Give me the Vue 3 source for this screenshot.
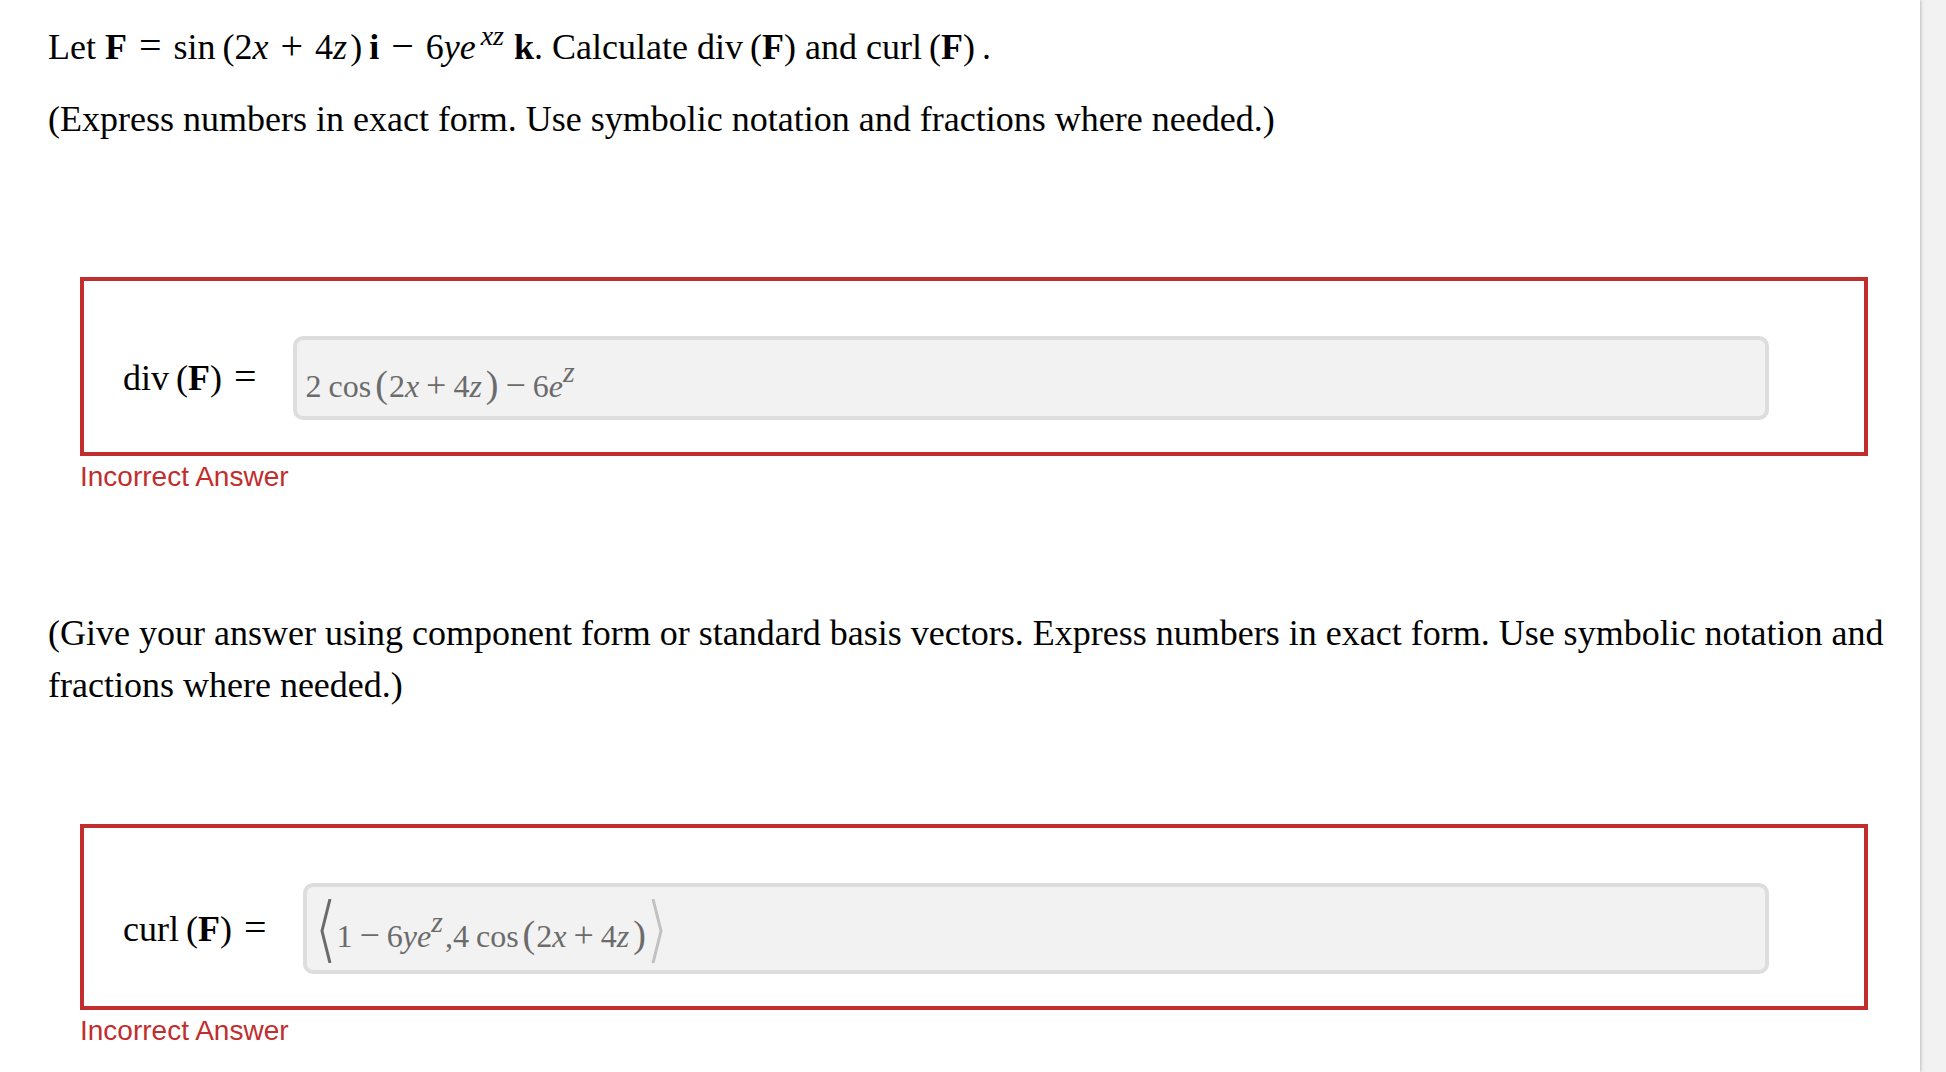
<script setup>
import { ref } from 'vue'

const divAnswer = ref('')
const curlAnswer = ref('')
</script>

<template>
  <main class="page">
    <p class="prompt">
      Let <b>F</b><span class="rel">=</span>sin<span class="thin"></span>(2<i>x</i><span class="bin">+</span>4<i class="slant">z</i>)<span class="thin"></span><b>i</b><span class="bin">−</span>6<i>ye</i><sup class="power"><i>xz</i></sup><span class="thin"></span><b>k</b>. Calculate div<span class="thin"></span>(<b>F</b>) and curl<span class="thin"></span>(<b>F</b>)<span class="thin"></span>.
    </p>
    <p class="note">(Express numbers in exact form. Use symbolic notation and fractions where needed.)</p>

    <section class="answer">
      <div class="frame">
        <label class="name" for="div-answer">div<span class="thin"></span>(<b>F</b>)<span class="rel end">=</span></label>
        <div class="field">
          <input id="div-answer" v-model="divAnswer" class="box" type="text" disabled />
          <div class="math">
            <span>2</span><span class="fn">cos</span><span class="paren">(</span><span>2<i>x</i></span><span class="op">+</span><span>4<i>z</i></span><span class="paren close">)</span><span class="op">−</span><span>6<i>e</i></span><sup class="exp"><i>z</i></sup>
          </div>
        </div>
      </div>
      <p class="status">Incorrect Answer</p>
    </section>

    <p class="note second">
      (Give your answer using component form or standard basis vectors. Express numbers in exact form. Use symbolic notation and fractions where needed.)
    </p>

    <section class="answer last">
      <div class="frame">
        <label class="name" for="curl-answer">curl<span class="thin"></span>(<b>F</b>)<span class="rel end">=</span></label>
        <div class="field tall">
          <input id="curl-answer" v-model="curlAnswer" class="box" type="text" disabled />
          <div class="vector">
            <svg class="angle" viewBox="0 0 12 64" aria-hidden="true"><path d="M10 0 2 32l8 32" /></svg>
            <div class="math">
              <span>1</span><span class="op">−</span><span>6<i>ye</i></span><sup class="exp"><i>z</i></sup><span class="comma">,</span><span>4</span><span class="fn">cos</span><span class="paren">(</span><span>2<i>x</i></span><span class="op">+</span><span>4<i>z</i></span><span class="paren close">)</span>
            </div>
            <svg class="angle ghost" viewBox="0 0 12 64" aria-hidden="true"><path d="m2 0 8 32-8 32" /></svg>
          </div>
        </div>
      </div>
      <p class="status">Incorrect Answer</p>
    </section>
  </main>
</template>

<style>
body {
  margin: 0;
  background: #f2f2f2;
}
</style>

<style scoped>
.page {
  box-sizing: border-box;
  min-height: 100vh;
  margin-right: 26px;
  padding: 21px 30px 0 48px;
  background: #fff;
  box-shadow: 0 0 4px rgba(0, 0, 0, 0.35);
  color: #000;
  font-family: "Liberation Serif", "Times New Roman", serif;
  font-size: 36px;
  line-height: 52px;
}
p {
  margin: 0;
}
.note {
  margin-top: 20px;
}
.note.second {
  margin-top: 109px;
}
.rel,
.bin {
  margin: 0 12px;
  font-size: 40px;
  line-height: 0;
}
.rel.end {
  margin-right: 0;
}
.slant {
  margin-right: 3px;
}
.thin {
  margin-left: 7px;
}
.power {
  margin: 0 3px 0 5px;
  font-size: 28px;
  line-height: 0;
  vertical-align: 14px;
}
.answer {
  margin: 132px 22px 0 32px;
}
.answer.last {
  margin-top: 113px;
}
.frame {
  display: flex;
  align-items: center;
  gap: 36px;
  padding: 55px 95px 32px 39px;
  border: 4px solid #c02e2d;
}
.name {
  white-space: nowrap;
}
.field {
  display: grid;
  flex: 1;
  height: 84px;
}
.field.tall {
  height: 91px;
}
.field > * {
  grid-area: 1 / 1;
}
.box {
  box-sizing: border-box;
  width: 100%;
  height: 100%;
  margin: 0;
  border: 4px solid #ddd;
  border-radius: 10px;
  background: #f2f2f2;
}
.math {
  color: #6b6b6b;
  font-size: 32px;
  line-height: 52px;
  white-space: nowrap;
}
.field > .math {
  padding: 24px 13px 0;
}
.vector {
  display: flex;
  align-items: center;
  gap: 5px;
  padding: 5px 17px 0;
}
.vector .math {
  padding-top: 10px;
}
.angle {
  width: 12px;
  height: 64px;
  fill: none;
  stroke: #6b6b6b;
  stroke-width: 3;
}
.angle.ghost {
  stroke: #c1c1c1;
}
.fn {
  margin: 0 4px 0 7px;
}
.paren {
  margin-right: 1px;
  font-size: 38px;
  line-height: 0;
}
.paren.close {
  margin: 0 0 0 4px;
}
.op {
  margin: 0 7px;
  font-size: 36px;
  line-height: 0;
}
.exp {
  font-size: 30px;
  line-height: 0;
  vertical-align: 15px;
}
.comma {
  margin-left: 2px;
}
.status {
  color: #c02e2d;
  font-family: "Liberation Sans", Arial, sans-serif;
  font-size: 28px;
  line-height: 42px;
}
</style>
